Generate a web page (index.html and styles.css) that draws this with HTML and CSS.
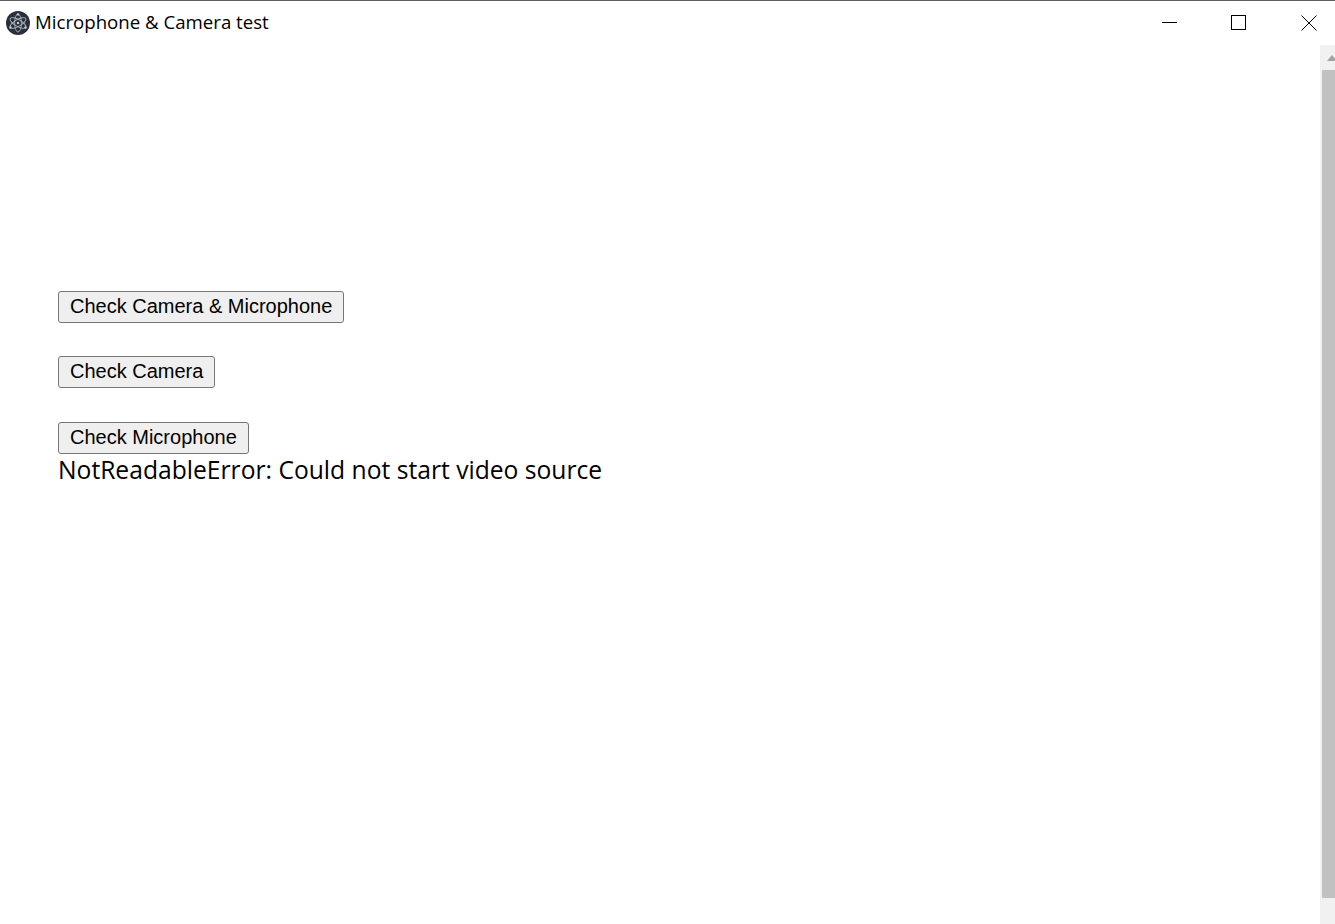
FILE: index.html
```html
<!doctype html>
<html lang="en">
  <head>
    <meta charset="UTF-8" />
    <title>Microphone &amp; Camera test</title>
    <link rel="stylesheet" href="styles.css">
  </head>

  <body>
    <!-- Title bar -->
    <header class="titlebar">
      <svg class="app-icon" viewBox="0 0 24 24" width="24" height="24">
        <circle cx="12" cy="12" r="12" fill="#2b2f3b" />
        <g fill="none" stroke="#a9b4bd" stroke-width="0.9">
          <ellipse cx="12" cy="12" rx="9" ry="3.4" transform="rotate(30 12 12)" />
          <ellipse cx="12" cy="12" rx="9" ry="3.4" transform="rotate(90 12 12)" />
          <ellipse cx="12" cy="12" rx="9" ry="3.4" transform="rotate(150 12 12)" />
        </g>
        <g fill="#c3ccd3">
          <circle cx="12" cy="12" r="1.2" />
          <circle cx="12" cy="3.4" r="1.2" />
          <circle cx="4.5" cy="16.5" r="1.2" />
          <circle cx="19.5" cy="16.5" r="1.2" />
        </g>
      </svg>
      <span class="app-title">Microphone &amp; Camera test</span>
      <div class="window-controls">
        <button class="win-btn" type="button" aria-label="Minimize">
          <svg viewBox="0 0 16 16" width="16" height="16"><path d="M1 7.5H16" stroke="#000" fill="none" /></svg>
        </button>
        <button class="win-btn" type="button" aria-label="Maximize">
          <svg viewBox="0 0 16 16" width="16" height="16"><rect x="0.5" y="0.5" width="14" height="14" stroke="#000" fill="none" /></svg>
        </button>
        <button class="win-btn" type="button" aria-label="Close">
          <svg viewBox="0 0 16 16" width="16" height="16"><path d="M0.5 0.5L15.5 15.5M15.5 0.5L0.5 15.5" stroke="#000" fill="none" /></svg>
        </button>
      </div>
    </header>

    <div class="window-body">
      <main class="content">
        <div class="checks">
          <button class="check-btn" type="button">Check Camera &amp; Microphone</button>
          <button class="check-btn" type="button">Check Camera</button>
          <button class="check-btn last" type="button">Check Microphone</button>
        </div>
        <div class="error-text">NotReadableError: Could not start video source</div>
      </main>

      <!-- Scrollbar -->
      <div class="scrollbar">
        <div class="scroll-arrow"></div>
        <div class="scroll-thumb"></div>
      </div>
    </div>
  </body>
</html>
```

FILE: styles.css
```css
html,
body {
  height: 100%;
}

body {
  margin: 0;
  display: flex;
  flex-direction: column;
  overflow: hidden;
  background-color: #fff;
  color: #000;
}

.titlebar {
  display: flex;
  align-items: center;
  flex: none;
  height: 44px;
  padding-left: 6px;
  border-top: 1px solid #5f5f5f;
}

.app-icon {
  flex: none;
}

.app-title {
  margin: -4px 0 0 5px;
  font-family: "Open Sans", "Noto Sans", sans-serif;
  font-size: 18.65px;
}

.window-controls {
  display: flex;
  margin-left: auto;
  padding-right: 18px;
  gap: 54px;
}

.win-btn {
  display: flex;
  padding: 0;
  border: none;
  background: none;
}

.window-body {
  display: flex;
  flex: 1;
  min-height: 0;
}

.content {
  flex: 1;
  padding: 246px 0 0 58px;
}

.checks {
  display: flex;
  flex-direction: column;
  align-items: flex-start;
  gap: 33px;
}

.check-btn {
  height: 32px;
  padding: 0 11px 2px;
  border: 1px solid #767676;
  border-radius: 3px;
  background-color: #efefef;
  color: #000;
  font-family: "Liberation Sans", Arial, sans-serif;
  font-size: 20px;
}

.check-btn.last {
  margin-top: 1px;
}

.error-text {
  font-family: "Open Sans", "Noto Sans", sans-serif;
  font-size: 24.65px;
  line-height: 31px;
}

.scrollbar {
  display: flex;
  flex-direction: column;
  flex: none;
  width: 15px;
  overflow: hidden;
  background-color: #f1f1f1;
}

.scroll-arrow {
  width: 0;
  height: 0;
  margin: 10px 0 0 7px;
  border-left: 5px solid transparent;
  border-right: 5px solid transparent;
  border-bottom: 6px solid #a3a3a3;
}

.scroll-thumb {
  height: 828px;
  margin: 9px 0 0 2px;
  background-color: #c1c1c1;
}
```
